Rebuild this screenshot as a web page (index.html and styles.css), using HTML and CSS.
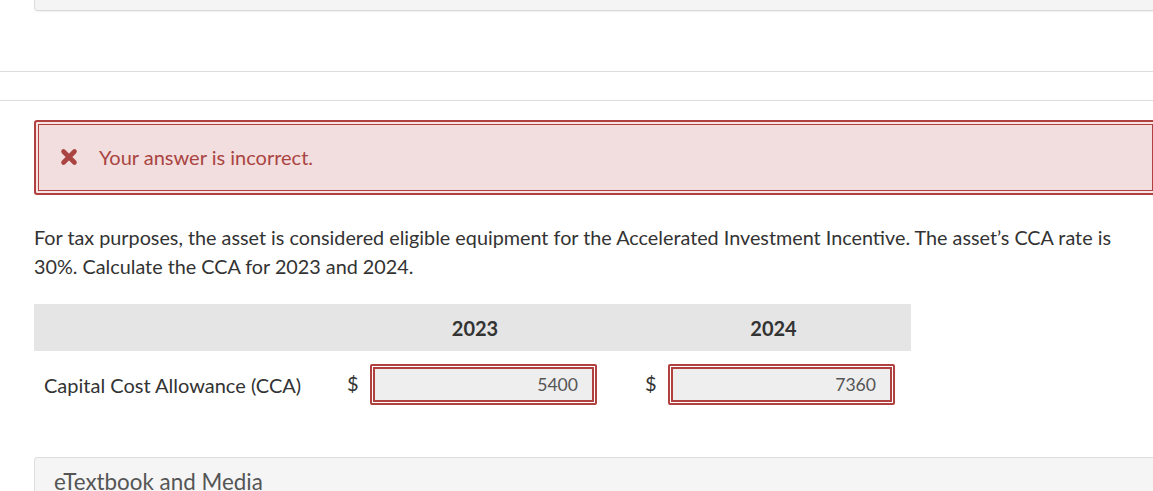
FILE: index.html
```html
<!DOCTYPE html>
<html lang="en">
<head>
<meta charset="utf-8">
<title>Question</title>
<link rel="stylesheet" href="styles.css">
</head>
<body>
<div class="top-panel"></div>
<div class="rule rule-first"></div>
<div class="rule rule-second"></div>

<div class="alert">
  <svg class="alert-icon" viewBox="0 0 18 18" width="18" height="18" aria-hidden="true">
    <path d="M3.5 3.5 L14.5 14.5 M14.5 3.5 L3.5 14.5" stroke="#a94442" stroke-width="4.6" stroke-linecap="round" fill="none"/>
  </svg>
  <span class="alert-text">Your answer is incorrect.</span>
</div>

<p class="question">For tax purposes, the asset is considered eligible equipment for the Accelerated Investment Incentive. The asset’s CCA rate is 30%. Calculate the CCA for 2023 and 2024.</p>

<div class="answer-table">
  <div class="head-row">
    <div class="head-cell head-label"></div>
    <div class="head-cell head-year">2023</div>
    <div class="head-gap"></div>
    <div class="head-cell head-year">2024</div>
  </div>
  <div class="body-row">
    <div class="row-label">Capital Cost Allowance (CCA)</div>
    <div class="year-cell">
      <span class="currency">$</span>
      <div class="input-wrap"><span class="input-value">5400</span></div>
    </div>
    <div class="head-gap"></div>
    <div class="year-cell">
      <span class="currency">$</span>
      <div class="input-wrap"><span class="input-value">7360</span></div>
    </div>
  </div>
</div>

<div class="media-panel">eTextbook and Media</div>
</body>
</html>
```

FILE: styles.css
```css
html, body {
  margin: 0;
  padding: 0;
  overflow: hidden;
  background: #ffffff;
}

body {
  font-family: Lato, "Open Sans", "Liberation Sans", sans-serif;
  color: #333333;
  width: 1153px;
  height: 491px;
}

.top-panel {
  margin-left: 34px;
  margin-right: -12px;
  height: 10px;
  background: #f4f4f4;
  border-left: 1px solid #dddddd;
  border-bottom: 1px solid #d9d9d9;
  border-bottom-left-radius: 4px;
  box-shadow: 0 1px 2px rgba(0, 0, 0, 0.06);
}

.rule {
  height: 1px;
  background: #dddddd;
}

.rule-first {
  margin-top: 60px;
}

.rule-second {
  margin-top: 28px;
}

.alert {
  margin-top: 19px;
  margin-left: 34px;
  margin-right: -4px;
  height: 71px;
  background: #f2dede;
  border: 2px solid #b0413e;
  border-radius: 3px;
  box-shadow: inset 0 0 0 2px #f7e4e4, inset 0 0 0 3px #b0413e;
  display: flex;
  align-items: center;
  padding-left: 24px;
}

.alert-icon {
  display: block;
  width: 18px;
  height: 18px;
  margin-top: -1px;
}

.alert-text {
  margin-left: 21px;
  font-size: 20px;
  color: #a94442;
  margin-top: -2px;
}

.question {
  margin: 28px 0 0 34px;
  width: 1095px;
  font-size: 19.8px;
  line-height: 29px;
  color: #333333;
}

.answer-table {
  margin: 23px 0 0 34px;
  width: 877px;
}

.head-row {
  display: grid;
  grid-template-columns: 304px 274px 24px 275px;
  height: 47px;
  background: #e5e5e5;
  align-items: center;
}

.head-year {
  text-align: center;
  font-weight: bold;
  font-size: 20px;
  color: #333333;
}

.body-row {
  display: grid;
  grid-template-columns: 304px 274px 24px 275px;
  align-items: center;
  padding-top: 13px;
}

.row-label {
  padding-left: 10px;
  font-size: 20px;
  color: #333333;
}

.year-cell {
  display: flex;
  align-items: center;
}

.currency {
  width: 23px;
  padding-left: 9px;
  font-size: 20px;
  color: #333333;
  margin-top: -4px;
}

.input-wrap {
  box-sizing: border-box;
  width: 227px;
  height: 41px;
  background: #eeeeee;
  border: 2px solid #b0413e;
  box-shadow: inset 0 0 0 1px #ffffff, inset 0 0 0 3px #b0413e;
  border-radius: 2px;
  display: flex;
  align-items: center;
  justify-content: flex-end;
  padding-right: 17px;
}

.input-value {
  font-size: 17.6px;
  color: #555555;
}

.media-panel {
  margin: 52px -12px 0 34px;
  height: 40px;
  box-sizing: border-box;
  background: #f5f5f5;
  border-left: 1px solid #dddddd;
  border-top: 1px solid #dddddd;
  border-top-left-radius: 4px;
  padding: 10px 0 0 19px;
  font-size: 22.4px;
  color: #555555;
}
```
